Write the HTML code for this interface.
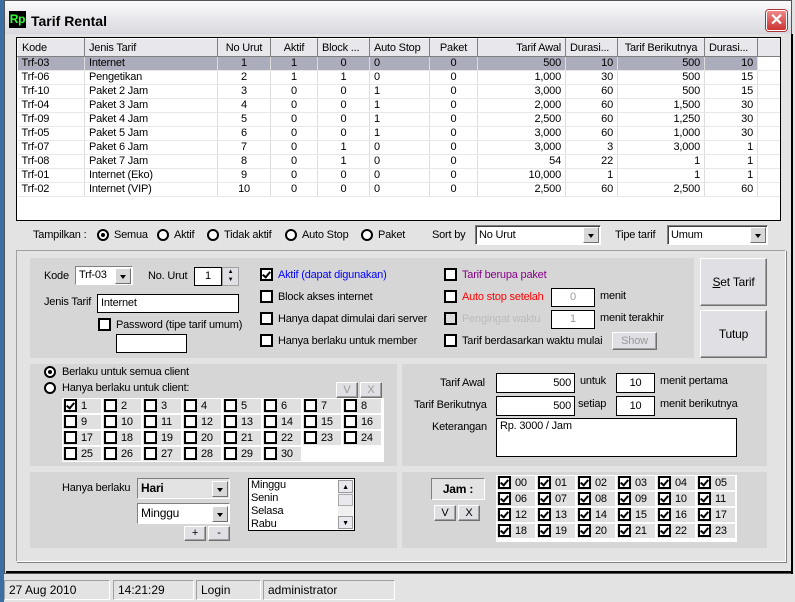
<!DOCTYPE html><html><head><meta charset="utf-8"><style>
*{box-sizing:border-box;margin:0;padding:0}
body{width:795px;height:602px;overflow:hidden;background:#e3e3e3;font:11px "Liberation Sans",sans-serif;letter-spacing:-0.2px;color:#000;position:relative}
.a{position:absolute}
.t{position:absolute;white-space:nowrap;line-height:13px}
.cb{position:absolute;width:13px;height:13px;border:2px solid #000;background:#fff}
.cb.k::after{content:"";position:absolute;left:2px;top:0px;width:3px;height:6px;border:solid #000;border-width:0 2px 2px 0;transform:rotate(40deg)}
.rd{position:absolute;width:12px;height:12px;border:2px solid #000;border-radius:50%;background:#fff}
.rd.k::after{content:"";position:absolute;left:2px;top:2px;width:4px;height:4px;border-radius:50%;background:#000}
.in{position:absolute;background:#fff;border:1px solid #000;line-height:18px;padding:0 3px;white-space:nowrap}
.btn{position:absolute;background:#e0dfe3;border:1px solid;border-color:#fff #707070 #707070 #fff;box-shadow:inset -1px -1px #a0a0a0;text-align:center}
.pn{position:absolute;background:#d6d6d6}
.dd{position:absolute;width:16px;height:16px;top:1px;right:1px;background:#d8d8d8;border:1px solid;border-color:#fff #707070 #707070 #fff}
.dd::after{content:"";position:absolute;left:4px;top:6px;border:3px solid transparent;border-top:4px solid #000;border-bottom:0}
table{border-collapse:collapse;table-layout:fixed}
td{height:14px;line-height:13px;padding:0 4px;border-right:1px solid #ddd;border-bottom:1px solid #e8e8e8;white-space:nowrap;overflow:hidden}
th{height:18px;font-weight:normal;background:#e8e8ec;border:1px solid;border-color:#fff #808080 #808080 #fff;padding:0 4px;white-space:nowrap;overflow:hidden}
.c{text-align:center}.r{text-align:right}.l{text-align:left}
tr.s td{background:#abacbc}
.g{position:absolute;background:#fff;display:flex;flex-wrap:wrap;align-content:flex-start}
.g div{width:38px;height:14px;margin:1px 2px 1px 0;background:#e0e0e0;position:relative;padding-left:18px;line-height:14px}
.g div i{position:absolute;left:1px;top:0;width:13px;height:13px;border:2px solid #000;background:#fff}
.g div i.k::after{content:"";position:absolute;left:2px;top:0;width:3px;height:6px;border:solid #000;border-width:0 2px 2px 0;transform:rotate(40deg)}
.sb{position:absolute;top:580px;height:20px;border:1px solid;border-color:#a0a0a0 #fff #fff #a0a0a0;line-height:18px;padding-left:4px;font-size:12px;letter-spacing:0}
</style></head><body>
<div class="a" style="left:0;top:0;width:4px;height:602px;background:#3a6ea5"></div>
<div class="a" style="left:4px;top:0;width:788px;height:574px;border:1px solid #555;background:#e3e3e3"></div>
<div class="a" style="left:5px;top:1px;width:786px;height:33px;background:linear-gradient(#fbfbfc,#e6e6ea 60%,#d8d8de)"></div>
<div class="a" style="left:9px;top:11px;width:17px;height:17px;background:#000;color:#3f3;font:bold 12px 'Liberation Sans';line-height:17px;text-align:center">Rp</div>
<div class="t" style="left:31px;top:13px;font-size:14px;font-weight:bold;line-height:16px;letter-spacing:0">Tarif Rental</div>
<div class="a" style="left:766px;top:10px;width:21px;height:21px;border-radius:3px;background:linear-gradient(#e88,#c33);border:1px solid #fff;box-shadow:0 0 0 1px #a33;color:#fff;font:bold 16px 'Liberation Sans';text-align:center;line-height:19px">✕</div>
<div class="a" style="left:791px;top:34px;width:2px;height:540px;background:#000"></div>
<div class="a" style="left:6px;top:571px;width:787px;height:2px;background:#000"></div>

<div class="a" style="left:16px;top:37px;width:765px;height:184px;background:#fff;border:1px solid #000;overflow:hidden">
<table style="width:763px"><colgroup><col style="width:67px"><col style="width:133px"><col style="width:53px"><col style="width:47px"><col style="width:52px"><col style="width:60px"><col style="width:48px"><col style="width:88px"><col style="width:52px"><col style="width:87px"><col style="width:53px"><col style="width:23px"></colgroup>
<tr><th class="l">Kode</th><th class="l">Jenis Tarif</th><th class="c">No Urut</th><th class="c">Aktif</th><th class="l">Block ...</th><th class="l">Auto Stop</th><th class="c">Paket</th><th class="r">Tarif Awal</th><th class="l">Durasi...</th><th class="c">Tarif Berikutnya</th><th class="l">Durasi...</th><th></th></tr>
<tr class="s"><td>Trf-03</td><td>Internet</td><td class="c">1</td><td class="c">1</td><td class="c">0</td><td>0</td><td class="c">0</td><td class="r">500</td><td class="r">10</td><td class="r">500</td><td class="r">10</td><td style="background:#fff"></td></tr>
<tr><td>Trf-06</td><td>Pengetikan</td><td class="c">2</td><td class="c">1</td><td class="c">1</td><td>0</td><td class="c">0</td><td class="r">1,000</td><td class="r">30</td><td class="r">500</td><td class="r">15</td><td></td></tr>
<tr><td>Trf-10</td><td>Paket 2 Jam</td><td class="c">3</td><td class="c">0</td><td class="c">0</td><td>1</td><td class="c">0</td><td class="r">3,000</td><td class="r">60</td><td class="r">500</td><td class="r">15</td><td></td></tr>
<tr><td>Trf-04</td><td>Paket 3 Jam</td><td class="c">4</td><td class="c">0</td><td class="c">0</td><td>1</td><td class="c">0</td><td class="r">2,000</td><td class="r">60</td><td class="r">1,500</td><td class="r">30</td><td></td></tr>
<tr><td>Trf-09</td><td>Paket 4 Jam</td><td class="c">5</td><td class="c">0</td><td class="c">0</td><td>1</td><td class="c">0</td><td class="r">2,500</td><td class="r">60</td><td class="r">1,250</td><td class="r">30</td><td></td></tr>
<tr><td>Trf-05</td><td>Paket 5 Jam</td><td class="c">6</td><td class="c">0</td><td class="c">0</td><td>1</td><td class="c">0</td><td class="r">3,000</td><td class="r">60</td><td class="r">1,000</td><td class="r">30</td><td></td></tr>
<tr><td>Trf-07</td><td>Paket 6 Jam</td><td class="c">7</td><td class="c">0</td><td class="c">1</td><td>0</td><td class="c">0</td><td class="r">3,000</td><td class="r">3</td><td class="r">3,000</td><td class="r">1</td><td></td></tr>
<tr><td>Trf-08</td><td>Paket 7 Jam</td><td class="c">8</td><td class="c">0</td><td class="c">1</td><td>0</td><td class="c">0</td><td class="r">54</td><td class="r">22</td><td class="r">1</td><td class="r">1</td><td></td></tr>
<tr><td>Trf-01</td><td>Internet (Eko)</td><td class="c">9</td><td class="c">0</td><td class="c">0</td><td>0</td><td class="c">0</td><td class="r">10,000</td><td class="r">1</td><td class="r">1</td><td class="r">1</td><td></td></tr>
<tr><td>Trf-02</td><td>Internet (VIP)</td><td class="c">10</td><td class="c">0</td><td class="c">0</td><td>0</td><td class="c">0</td><td class="r">2,500</td><td class="r">60</td><td class="r">2,500</td><td class="r">60</td><td></td></tr>
</table></div>

<div class="t" style="left:33px;top:229px">Tampilkan :</div>
<div class="rd k" style="left:97px;top:229px"></div><div class="t" style="left:114px;top:229px">Semua</div>
<div class="rd" style="left:157px;top:229px"></div><div class="t" style="left:174px;top:229px">Aktif</div>
<div class="rd" style="left:207px;top:229px"></div><div class="t" style="left:224px;top:229px">Tidak aktif</div>
<div class="rd" style="left:285px;top:229px"></div><div class="t" style="left:302px;top:229px">Auto Stop</div>
<div class="rd" style="left:361px;top:229px"></div><div class="t" style="left:378px;top:229px">Paket</div>
<div class="t" style="left:432px;top:229px">Sort by</div>
<div class="in" style="left:475px;top:225px;width:126px;height:20px;border-color:#808080 #fff #fff #808080;box-shadow:inset 1px 1px #404040">No Urut<div class="dd"></div></div>
<div class="t" style="left:615px;top:229px">Tipe tarif</div>
<div class="in" style="left:667px;top:225px;width:101px;height:20px;border-color:#808080 #fff #fff #808080;box-shadow:inset 1px 1px #404040">Umum<div class="dd"></div></div>

<div class="a" style="left:16px;top:250px;width:770px;height:312px;border:1px solid;border-color:#a0a0a0 #fff #fff #a0a0a0;box-shadow:1px 1px 0 #808080"></div>

<div class="pn" style="left:30px;top:258px;width:664px;height:100px"></div>
<div class="t" style="left:44px;top:270px">Kode</div>
<div class="in" style="left:75px;top:266px;width:58px;height:19px;line-height:17px;border-color:#808080 #fff #fff #808080">Trf-03<div class="dd"></div></div>
<div class="t" style="left:148px;top:270px">No. Urut</div>
<div class="in" style="left:194px;top:267px;width:28px;height:19px;line-height:17px;text-align:center">1</div>
<div class="a" style="left:222px;top:267px;width:17px;height:19px;background:#e0dfe3;border:1px solid #a0a0a0;font-size:6px;text-align:center;line-height:8px">▲<br>▼</div>
<div class="t" style="left:44px;top:296px">Jenis Tarif</div>
<div class="in" style="left:97px;top:294px;width:142px;height:19px;line-height:17px">Internet</div>
<div class="cb" style="left:98px;top:318px"></div><div class="t" style="left:116px;top:319px">Password (tipe tarif umum)</div>
<div class="in" style="left:116px;top:334px;width:71px;height:19px"></div>
<div class="cb k" style="left:260px;top:268px"></div><div class="t" style="left:278px;top:269px;color:#00f">Aktif (dapat digunakan)</div>
<div class="cb" style="left:260px;top:290px"></div><div class="t" style="left:278px;top:291px">Block akses internet</div>
<div class="cb" style="left:260px;top:312px"></div><div class="t" style="left:278px;top:313px">Hanya dapat dimulai dari server</div>
<div class="cb" style="left:260px;top:334px"></div><div class="t" style="left:278px;top:335px">Hanya berlaku untuk member</div>
<div class="cb" style="left:444px;top:268px"></div><div class="t" style="left:462px;top:269px;color:#808">Tarif berupa paket</div>
<div class="cb" style="left:444px;top:290px"></div><div class="t" style="left:462px;top:291px;color:#f00">Auto stop setelah</div>
<div class="in" style="left:551px;top:288px;width:44px;height:19px;line-height:17px;text-align:center;color:#999">0</div><div class="t" style="left:600px;top:290px">menit</div>
<div class="cb" style="left:444px;top:312px;background:#ddd"></div><div class="t" style="left:462px;top:313px;color:#bbb">Pengingat waktu</div>
<div class="in" style="left:551px;top:310px;width:44px;height:19px;line-height:17px;text-align:center;color:#999">1</div><div class="t" style="left:600px;top:312px">menit terakhir</div>
<div class="cb" style="left:444px;top:334px"></div><div class="t" style="left:462px;top:335px">Tarif berdasarkan waktu mulai</div>
<div class="btn" style="left:612px;top:332px;width:45px;height:18px;line-height:16px;color:#999">Show</div>
<div class="btn" style="left:700px;top:258px;width:67px;height:48px;line-height:46px;font-size:12px"><u>S</u>et Tarif</div>
<div class="btn" style="left:700px;top:310px;width:67px;height:48px;line-height:46px;font-size:12px">Tutup</div>

<div class="pn" style="left:30px;top:364px;width:367px;height:102px"></div>
<div class="rd k" style="left:44px;top:366px"></div><div class="t" style="left:62px;top:366px">Berlaku untuk semua client</div>
<div class="rd" style="left:44px;top:382px"></div><div class="t" style="left:62px;top:382px">Hanya berlaku untuk client:</div>
<div class="btn" style="left:336px;top:382px;width:22px;height:16px;line-height:14px;color:#999">V</div>
<div class="btn" style="left:360px;top:382px;width:22px;height:16px;line-height:14px;color:#999">X</div>
<div class="g" style="left:62px;top:398px;width:322px;height:64px;padding-left:1px">
<div><i class="k"></i>1</div><div><i></i>2</div><div><i></i>3</div><div><i></i>4</div><div><i></i>5</div><div><i></i>6</div><div><i></i>7</div><div><i></i>8</div>
<div><i></i>9</div><div><i></i>10</div><div><i></i>11</div><div><i></i>12</div><div><i></i>13</div><div><i></i>14</div><div><i></i>15</div><div><i></i>16</div>
<div><i></i>17</div><div><i></i>18</div><div><i></i>19</div><div><i></i>20</div><div><i></i>21</div><div><i></i>22</div><div><i></i>23</div><div><i></i>24</div>
<div><i></i>25</div><div><i></i>26</div><div><i></i>27</div><div><i></i>28</div><div><i></i>29</div><div><i></i>30</div></div>

<div class="pn" style="left:402px;top:364px;width:365px;height:102px"></div>
<div class="t" style="left:440px;top:377px">Tarif Awal</div>
<div class="in" style="left:496px;top:373px;width:79px;height:20px;text-align:right">500</div>
<div class="t" style="left:580px;top:375px">untuk</div>
<div class="in" style="left:616px;top:373px;width:39px;height:20px;text-align:center">10</div>
<div class="t" style="left:660px;top:375px">menit pertama</div>
<div class="t" style="left:414px;top:399px">Tarif Berikutnya</div>
<div class="in" style="left:496px;top:396px;width:79px;height:20px;text-align:right">500</div>
<div class="t" style="left:578px;top:398px">setiap</div>
<div class="in" style="left:616px;top:396px;width:39px;height:20px;text-align:center">10</div>
<div class="t" style="left:660px;top:398px">menit berikutnya</div>
<div class="t" style="left:432px;top:421px">Keterangan</div>
<div class="in" style="left:496px;top:418px;width:241px;height:39px;line-height:15px">Rp. 3000 / Jam</div>

<div class="pn" style="left:30px;top:472px;width:367px;height:76px"></div>
<div class="t" style="left:62px;top:482px">Hanya berlaku</div>
<div class="in" style="left:137px;top:478px;width:93px;height:21px;background:#e3e3e3;border-color:#808080 #fff #fff #808080;font-weight:bold;font-size:12px">Hari<div class="dd" style="top:2px"></div></div>
<div class="in" style="left:137px;top:503px;width:93px;height:21px;border-color:#808080 #fff #fff #808080;font-size:12px">Minggu<div class="dd" style="top:2px"></div></div>
<div class="btn" style="left:184px;top:526px;width:22px;height:15px;line-height:13px">+</div>
<div class="btn" style="left:208px;top:526px;width:22px;height:15px;line-height:13px">-</div>
<div class="in" style="left:248px;top:478px;width:107px;height:53px;line-height:13px;padding:0 2px">Minggu<br>Senin<br>Selasa<br>Rabu
<div class="a" style="right:1px;top:1px;width:15px;height:49px;background:#f0f0f0"><div style="height:13px;border:1px solid #999;background:#e8e8ee;font-size:7px;text-align:center">▲</div><div style="height:12px;border:1px solid #aaa;background:#e8e8ee;margin-top:1px"></div><div style="position:absolute;bottom:0;width:15px;height:13px;border:1px solid #999;background:#e8e8ee;font-size:7px;text-align:center">▼</div></div></div>

<div class="pn" style="left:402px;top:472px;width:365px;height:76px"></div>
<div class="a" style="left:431px;top:478px;width:54px;height:22px;background:#e3e3e3;border:1px solid;border-color:#808080 #fff #fff #808080;font-weight:bold;font-size:12px;text-align:center;line-height:20px">Jam :</div>
<div class="btn" style="left:434px;top:505px;width:22px;height:16px;line-height:14px">V</div>
<div class="btn" style="left:458px;top:505px;width:22px;height:16px;line-height:14px">X</div>
<div class="g" style="left:496px;top:475px;width:241px;height:67px;padding-left:1px">
<div><i class="k"></i>00</div><div><i class="k"></i>01</div><div><i class="k"></i>02</div><div><i class="k"></i>03</div><div><i class="k"></i>04</div><div><i class="k"></i>05</div>
<div><i class="k"></i>06</div><div><i class="k"></i>07</div><div><i class="k"></i>08</div><div><i class="k"></i>09</div><div><i class="k"></i>10</div><div><i class="k"></i>11</div>
<div><i class="k"></i>12</div><div><i class="k"></i>13</div><div><i class="k"></i>14</div><div><i class="k"></i>15</div><div><i class="k"></i>16</div><div><i class="k"></i>17</div>
<div><i class="k"></i>18</div><div><i class="k"></i>19</div><div><i class="k"></i>20</div><div><i class="k"></i>21</div><div><i class="k"></i>22</div><div><i class="k"></i>23</div></div>

<div class="sb" style="left:4px;width:106px">27 Aug 2010</div>
<div class="sb" style="left:113px;width:81px">14:21:29</div>
<div class="sb" style="left:196px;width:65px">Login</div>
<div class="sb" style="left:263px;width:132px">administrator</div>
</body></html>
